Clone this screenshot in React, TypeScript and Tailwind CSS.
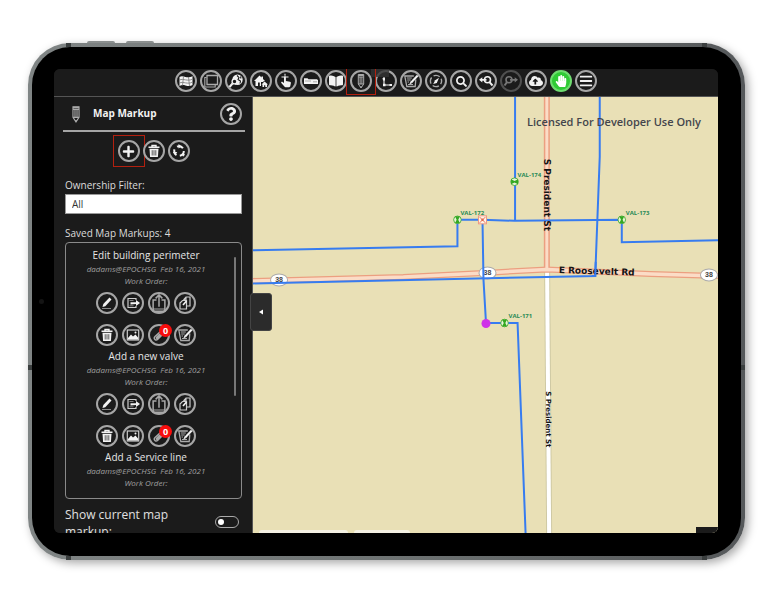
import { useState, type ReactNode } from 'react';
import { FaBars, FaBookOpen, FaCloudUploadAlt, FaHandPaper, FaPlus, FaQuestion, FaSearch } from 'react-icons/fa';

interface IconButtonProps {
  label: string;
  children: ReactNode;
  className?: string;
}

function IconButton({ label, children, className = 'border-[#a6a6a6] text-[#f2f2f2]' }: IconButtonProps) {
  return (
    <button
      type="button"
      aria-label={label}
      className={`relative flex h-[22px] w-[22px] shrink-0 cursor-pointer items-center justify-center rounded-full border-2 ${className}`}
    >
      {children}
    </button>
  );
}

function Glyph({ children, className = 'h-4 w-4' }: { children: ReactNode; className?: string }) {
  return (
    <svg viewBox="0 0 16 16" fill="none" stroke="currentColor" className={`shrink-0 ${className}`} aria-hidden="true">
      {children}
    </svg>
  );
}

const MapGlyph = () => (
  <Glyph>
    <path d="M1.500 4c2-1.500 4-.6 6 0s4.500 .6 7-1v9c-2 1.500-4.500 1-7 .4s-4-.6-6 .6z" fill="currentColor" stroke="none" />
    <path d="M1.500 7c4-2 8 2 13-1M1.500 10c4-2 8 2 13-1M5.500 3.500l-1 9M10.500 4l1 9" stroke="#777" strokeWidth=".8" />
  </Glyph>
);

const LayersGlyph = () => (
  <Glyph>
    <path d="M4 2.500h10.500v9H4z" stroke="#aaa" strokeWidth="1.300" />
    <path d="M3.500 4.500H1.800v9.500h10.400V12" stroke="#aaa" strokeWidth="1.100" />
  </Glyph>
);

const GlobeSearchGlyph = () => (
  <Glyph>
    <circle cx="9.500" cy="6.800" r="5.200" fill="currentColor" stroke="none" />
    <path d="M9 2.500l2 2-1 2 2.500 1.500-.5 2.500M12.500 3.500l.5 2" stroke="#1b1b1b" strokeWidth="1.100" />
    <circle cx="6.500" cy="8.500" r="2.400" fill="#1b1b1b" strokeWidth="1.400" />
    <path d="M4.500 10.500L1.500 14" strokeWidth="2" />
  </Glyph>
);

const HomeGlyph = () => (
  <Glyph>
    <path d="M1 8l5.500-5.500 2 2V3.500h1.500V6l2 2h-1.500v1H8v4H6.800V9.500H5V13H2.500V8z" fill="currentColor" stroke="none" />
    <path d="M8.500 11.500l3-3 3.500 3h-1V14h-1.700v-1.800h-1.200V14H9.500v-2.500z" fill="currentColor" stroke="none" />
  </Glyph>
);

const TouchGlyph = () => (
  <Glyph>
    <path d="M6 4.200c0-1.200 1.900-1.200 1.900 0V8l4 .7c.8.2 1.100.7 1 1.400l-.6 3c-.1.700-.6 1.100-1.200 1.100H7.500c-.5 0-.8-.2-1.100-.6L3.300 10c-.6-.9.5-1.700 1.300-1.100L6 10z" fill="currentColor" stroke="none" />
    <path d="M3.500 4h7M7 .8v2" strokeWidth="1.100" />
  </Glyph>
);

const ValveGlyph = () => (
  <Glyph>
    <path d="M1 5.300h3.500l1 1H14l1 1V11H1z" fill="currentColor" stroke="none" />
    <path d="M2 8h6M10 8.800h4" stroke="#888" strokeWidth=".7" />
  </Glyph>
);

const PencilGlyph = ({ className }: { className?: string }) => (
  <Glyph className={className}>
    <path d="M5.300 1.500h5.400v9.500L8 15l-2.700-4zM5.300 4h5.400M5.300 11h5.400M7.100 4v7M8.900 4v7" stroke="#aaa" strokeWidth="1" />
    <path d="M5.300 1.500h5.400V3H5.300zM7 13.300h2L8 15z" fill="#aaa" stroke="none" />
  </Glyph>
);

const MeasureGlyph = () => (
  <Glyph>
    <path d="M6 4v8h7" strokeWidth="1.100" />
    <path d="M4.500 5H7v2.500H5zM5 10.800h2.500v2.400H5zM11.500 11H14v2h-2.500z" fill="currentColor" stroke="none" />
  </Glyph>
);

const NoteGlyph = () => (
  <Glyph>
    <path d="M12.800 6.500l-.6 7H3.800L1.800 3h9" stroke="#aaa" strokeWidth="1.300" />
    <path d="M3.800 5h5M4.200 7h3.500M4.600 9H6M5 11.500h5" stroke="#aaa" strokeWidth="1" />
    <path d="M14.700 2.500l-6.500 7" strokeWidth="2" />
    <path d="M7.500 8.600l1.700 1.500-2.900 1.500z" fill="currentColor" stroke="none" />
  </Glyph>
);

const CompassGlyph = () => (
  <Glyph>
    <circle cx="8" cy="8" r="5.600" stroke="#aaa" strokeWidth="1.400" strokeDasharray="6.500 2.300" strokeDashoffset="3.200" />
    <path d="M11 4.800L8.800 10 5.200 11l2-3.800z" fill="currentColor" stroke="none" />
  </Glyph>
);

const SearchBackGlyph = ({ flip = false }: { flip?: boolean }) => (
  <Glyph>
    <circle cx={flip ? 6 : 9.500} cy="6.800" r="3" strokeWidth="1.600" />
    <path d={flip ? 'M4 9.200L1.500 12.500' : 'M11.500 9.200l3 3.300'} strokeWidth="2" />
    <path
      d={flip ? 'M15 6.800l-3.300-2.600v1.700H7v1.800h4.700v1.700z' : 'M1 6.800l3.300-2.600v1.700h4.200v1.800H4.300v1.700z'}
      fill="currentColor"
      stroke="none"
    />
  </Glyph>
);

const TrashGlyph = () => (
  <Glyph>
    <path d="M2.500 4.300h11M6 4V2.500h4V4" strokeWidth="1.400" />
    <path d="M3.500 5.800h9l-.6 8.200H4.100z" fill="currentColor" stroke="none" />
    <path d="M6.200 7.200v5.300M8 7.200v5.300M9.800 7.200v5.300" stroke="#1b1b1b" strokeWidth=".7" />
  </Glyph>
);

const RefreshGlyph = () => (
  <Glyph>
    <circle cx="8" cy="8" r="4.800" strokeWidth="2" strokeDasharray="6.500 3.500" />
    <path d="M7.500 1l3 2.200-3 2.200zM1.800 9h4.500l-2.200 3zM11 10.500l3.200 1-2.200 2.200z" fill="currentColor" stroke="none" />
  </Glyph>
);

const EditGlyph = () => (
  <Glyph>
    <path d="M3.500 12l.8-3L10.500 2.500l2 2L6.300 11.200z" fill="currentColor" stroke="none" />
    <path d="M3 13.500h9" stroke="#888" strokeWidth="1" />
  </Glyph>
);

const ExportGlyph = () => (
  <Glyph>
    <path d="M11 5V3.500H3v9h8V11" stroke="#ccc" strokeWidth="1.200" />
    <path d="M5.500 9.500V7.200H11V5l4 3-4 3V9z" fill="currentColor" stroke="none" />
    <path d="M4.500 5.500h4M4.500 10.800h4" stroke="#999" strokeWidth=".8" />
  </Glyph>
);

const ShareGlyph = () => (
  <Glyph className="h-[20px] w-[20px]">
    <path d="M6 5.500H3.300V14.500h9.400V5.500H10M8 11V2M5.300 4.300L8 1.500l2.700 2.800" stroke="#a9a9a9" strokeWidth="1.200" />
    <path d="M3 12.800h10" stroke="#a9a9a9" strokeWidth=".8" />
  </Glyph>
);

const CopyGlyph = () => (
  <Glyph>
    <path d="M6.500 5L9 2h4v9h-3M6.500 5H9V2" stroke="#ccc" strokeWidth="1.200" />
    <path d="M3 8l2.500-2.500H9.500V14H3z" stroke="#ccc" strokeWidth="1.200" />
    <path d="M6 10l3.500-4" strokeWidth="1.600" />
  </Glyph>
);

const ImageGlyph = () => (
  <Glyph>
    <rect x="2.300" y="3" width="11.400" height="10" stroke="#ccc" strokeWidth="1.200" />
    <path d="M3 12.500V11l3-3.500 2 2 2.500-2 2.500 3v2z" fill="currentColor" stroke="none" />
    <circle cx="10.500" cy="5.500" r="1" fill="currentColor" stroke="none" />
  </Glyph>
);

const ClipGlyph = () => (
  <Glyph>
    <path d="M10 4L4 9.500c-2 2 .8 4.800 2.800 2.800l5.500-5.600M9 7l-3.500 3.500c-.5.600.3 1.300.8.8L12 6" stroke="#a9a9a9" strokeWidth="1.400" />
  </Glyph>
);

const tools = [
  { label: 'Basemaps', icon: <MapGlyph /> },
  { label: 'Layers', icon: <LayersGlyph /> },
  { label: 'Find location', icon: <GlobeSearchGlyph /> },
  { label: 'Home', icon: <HomeGlyph /> },
  { label: 'Identify', icon: <TouchGlyph /> },
  { label: 'Valve isolation', icon: <ValveGlyph /> },
  { label: 'Bookmarks', icon: <FaBookOpen className="h-[14px] w-[14px]" /> },
  { label: 'Map markup', icon: <PencilGlyph />, active: true },
  { label: 'Measure', icon: <MeasureGlyph />, hint: true },
  { label: 'Notes', icon: <NoteGlyph /> },
  { label: 'Locate me', icon: <CompassGlyph /> },
  { label: 'Search', icon: <FaSearch className="h-[11px] w-[11px]" /> },
  { label: 'Previous extent', icon: <SearchBackGlyph /> },
  { label: 'Next extent', icon: <SearchBackGlyph flip />, tone: 'border-[#505050] text-[#777]' },
  { label: 'Sync', icon: <FaCloudUploadAlt className="h-[14px] w-[14px]" /> },
  { label: 'Pan', icon: <FaHandPaper className="h-3 w-3" />, tone: 'border-[#6fdc70] bg-[#2fcb35] text-white' },
  { label: 'Menu', icon: <FaBars className="h-[14px] w-[14px]" /> },
];

const markups = [
  { title: 'Edit building perimeter', author: 'dadams@EPOCHSG', date: 'Feb 16, 2021', attachments: 0 },
  { title: 'Add a new valve', author: 'dadams@EPOCHSG', date: 'Feb 16, 2021', attachments: 0 },
  { title: 'Add a Service line', author: 'dadams@EPOCHSG', date: 'Feb 16, 2021', attachments: 0 },
];

function Toolbar() {
  return (
    <header className="flex h-7 shrink-0 items-start justify-center gap-[3px] border-b border-[#555] bg-[#1b1b1b] pt-px">
      {tools.map((tool) => (
        <div key={tool.label} className="relative">
          <IconButton label={tool.label} className={tool.tone}>
            {tool.icon}
          </IconButton>
          {tool.active && <span className="pointer-events-none absolute -inset-x-1 -top-1 -bottom-[3px] z-10 border border-[#b3200f]" />}
          {tool.hint && <span className="pointer-events-none absolute -top-px -left-1 h-2 w-[18px] bg-[#333]/80" />}
        </div>
      ))}
    </header>
  );
}

function MarkupItem({ markup }: { markup: typeof markups[number] }) {
  return (
    <li className="flex flex-col items-center pb-[3px]">
      <h3 className="text-[10px] leading-[15px] whitespace-nowrap text-[#e6e6e6]">{markup.title}</h3>
      <p className="text-[8px] leading-3 whitespace-nowrap text-[#a0a0a0] italic">
        {markup.author}&nbsp; {markup.date}
      </p>
      <p className="text-[8px] leading-3 text-[#a0a0a0] italic">Work Order:</p>
      <div className="mt-[5px] grid grid-cols-4 gap-x-1 gap-y-[10px]">
        <IconButton label="Edit"><EditGlyph /></IconButton>
        <IconButton label="Export"><ExportGlyph /></IconButton>
        <IconButton label="Share"><ShareGlyph /></IconButton>
        <IconButton label="Copy"><CopyGlyph /></IconButton>
        <IconButton label="Delete"><TrashGlyph /></IconButton>
        <IconButton label="Image"><ImageGlyph /></IconButton>
        <IconButton label="Attachments">
          <ClipGlyph />
          <span className="absolute -top-[2px] -right-[4px] flex h-[13px] w-[13px] items-center justify-center rounded-full bg-[#f80d0d] text-[9px] leading-none font-bold text-white">
            {markup.attachments}
          </span>
        </IconButton>
        <IconButton label="Notes"><NoteGlyph /></IconButton>
      </div>
    </li>
  );
}

function Sidebar() {
  const [showCurrent, setShowCurrent] = useState(false);

  return (
    <aside className="relative flex w-[199px] shrink-0 flex-col border-r border-[#555] bg-[#1b1b1b] pr-[10px] pl-[11px]">
      <div className="-mr-[3px] -ml-[2px] flex h-[35px] shrink-0 items-center border-b-2 border-[#a5a5a5] pr-[3px] pl-1">
        <PencilGlyph className="h-[18px] w-[18px]" />
        <h2 className="ml-2 flex-1 text-[10px] font-bold text-[#f2f2f2]">Map Markup</h2>
        <IconButton label="Help">
          <FaQuestion className="h-[14px] w-[14px]" />
        </IconButton>
      </div>

      <div className="mt-2 flex shrink-0 justify-center gap-[3px]">
        <div className="relative">
          <IconButton label="Add markup"><FaPlus className="h-[13px] w-[13px]" /></IconButton>
          <span className="pointer-events-none absolute -inset-[5px] border border-[#b3200f]" />
        </div>
        <IconButton label="Delete markups"><TrashGlyph /></IconButton>
        <IconButton label="Refresh"><RefreshGlyph /></IconButton>
      </div>

      <label htmlFor="owner" className="mt-[15px] text-[10px] leading-4 text-[#dcdcdc]">Ownership Filter:</label>
      <select id="owner" className="mt-px h-5 w-full shrink-0 appearance-none border border-[#999] bg-white px-[6px] text-[10px] text-[#333]">
        <option>All</option>
      </select>

      <p className="mt-[11px] text-[10px] leading-4 text-[#dcdcdc]">Saved Map Markups: 4</p>
      <div className="relative mt-px h-[257px] shrink-0 rounded-[4px] border border-[#8a8a8a] pt-[5px] pr-[15px] pb-2">
        <ul className="h-full overflow-hidden">
          {markups.map((markup) => (
            <MarkupItem key={markup.title} markup={markup} />
          ))}
        </ul>
        <span className="absolute top-[14px] right-[5px] h-[139px] w-[2px] rounded-full bg-[#777]" />
      </div>

      <div className="mt-[7px] flex items-start justify-between gap-4 pr-[3px]">
        <label htmlFor="current" className="text-[12px] leading-[17px] text-[#e0e0e0]">Show current map markup:</label>
        <input
          id="current"
          type="checkbox"
          role="switch"
          checked={showCurrent}
          onChange={(e) => setShowCurrent(e.target.checked)}
          className="mt-[10px] flex h-3 w-6 shrink-0 appearance-none items-center rounded-full border border-[#aaa] px-[2px] before:h-[6px] before:w-[6px] before:rounded-full before:bg-white checked:justify-end"
        />
      </div>

      <button
        type="button"
        aria-label="Collapse panel"
        className="absolute top-[196px] -right-5 z-10 flex h-[38px] w-[22px] items-center justify-center rounded-[3px] border border-[#444] bg-[#2b2b2b] text-white"
      >
        <svg viewBox="0 0 6 6" className="h-[6px] w-[6px]" fill="currentColor"><path d="M5 .5v5L1 3z" /></svg>
      </button>
    </aside>
  );
}

const valves = [
  { id: 'VAL-172', x: 204, y: 123, lx: 207, ly: 118, turn: 90 },
  { id: 'VAL-173', x: 368, y: 123, lx: 372, ly: 118, turn: 90 },
  { id: 'VAL-174', x: 261, y: 85, lx: 264, ly: 80, turn: 0 },
  { id: 'VAL-171', x: 251, y: 226, lx: 255, ly: 221, turn: 90 },
];

const shields = [
  { x: 26, y: 183 },
  { x: 234, y: 176 },
  { x: 455, y: 178 },
];

function MapView() {
  const highway = 'M0 184L150 180L240 175.500L293 172.500L397 177L464 179';

  return (
    <main className="relative min-w-0 flex-1 overflow-hidden bg-[#e9e0b6]">
      <svg viewBox="0 0 464 436" preserveAspectRatio="xMidYMid slice" className="block h-full w-full">
        <g fill="none">
          <path d="M293.500 175L295.500 436" stroke="#cfc9a4" strokeWidth="6" />
          <path d="M293.500 175L295.500 436" stroke="#fff" strokeWidth="4" />
          <path d={highway} stroke="#ec9f80" strokeWidth="6" />
          <path d="M293.200 0V173" stroke="#ec9f80" strokeWidth="6" />
          <path d={highway} stroke="#fbdcc6" strokeWidth="3.500" />
          <path d="M293.200 0V173" stroke="#fbdcc6" strokeWidth="3" />
        </g>
        {shields.map((s) => (
          <g key={s.x}>
            <ellipse cx={s.x} cy={s.y} rx="8.500" ry="6" fill="#fff" stroke="#aaa" />
            <text x={s.x} y={s.y + 2} textAnchor="middle" className="fill-[#444] font-[family-name:'Liberation_Sans',sans-serif] text-[7px] font-bold">38</text>
          </g>
        ))}
        <g fill="none" stroke="#377cf0" strokeWidth="2">
          <path d="M0 153.500L204 149.500V123H229L261 124L368 123V145.500L464 143.500" />
          <path d="M261.500 0V124" />
          <path d="M346 0V60L341.500 179L0 186.500" />
          <path d="M229 123L230 183L232.500 226H264L272 436" />
        </g>
        <g className="fill-[#141414] font-[family-name:'DejaVu_Sans',sans-serif] font-bold">
          <text transform="translate(290 62) rotate(90)" className="text-[9px]">S President St</text>
          <text transform="translate(292 294) rotate(90)" className="text-[7px]">S President St</text>
          <text transform="translate(305 176) rotate(2)" className="text-[9px]">E Roosevelt Rd</text>
        </g>
        <path d="M342 165L341.500 179H338" fill="none" stroke="#377cf0" strokeWidth="2" />
        {valves.map((v) => (
          <g key={v.id}>
            <g transform={`translate(${v.x} ${v.y}) rotate(${v.turn})`}>
              <circle r="3.800" fill="#e9f3d8" stroke="#35a822" strokeWidth=".8" />
              <path d="M-3.500-2.500L0-.8 3.500-2.500V2.500L0 .8-3.500 2.500z" fill="#35a822" />
            </g>
            <text x={v.lx} y={v.ly} className="fill-[#278a55] font-[family-name:'Open_Sans',sans-serif] text-[6px] font-bold">{v.id}</text>
          </g>
        ))}
        <rect x="225" y="119" width="8" height="8" fill="#fff3ea" stroke="#ef9a83" />
        <path d="M226 120l6 6M232 120l-6 6" stroke="#ef9a83" />
        <circle cx="229" cy="123" r="1.200" fill="#d9694f" />
        <circle cx="232.500" cy="226.500" r="4.500" fill="#cf32e8" />
      </svg>
      <p className="absolute top-[17px] right-[17px] text-[11px] leading-4 font-semibold whitespace-nowrap text-[#43454c]">
        Licensed For Developer Use Only
      </p>
      <div className="absolute bottom-0 left-[6px] flex gap-[6px]">
        <span className="h-[3px] w-[89px] rounded-t-sm bg-[#f4f1e4]" />
        <span className="h-[3px] w-14 rounded-t-sm bg-[#f4f1e4]" />
      </div>
      <span className="absolute right-0 bottom-0 h-[6px] w-[22px] bg-[#1b1b1b]" />
    </main>
  );
}

export default function App() {
  return (
    <div className="flex h-screen bg-white pt-[43px] pr-[23px] pb-[47px] pl-7 font-[family-name:'Open_Sans','Noto_Sans',sans-serif]">
      <div className="relative flex min-w-0 flex-1 rounded-[42px] bg-linear-to-r from-[#808585] via-[#6e7373] to-[#55585a] p-1 shadow-[3px_3px_10px_rgba(0,0,0,0.35)]">
        <span className="absolute -top-[2px] left-[59px] h-[2px] w-7 rounded-t-sm bg-[#8b8f8f]" />
        <span className="absolute -top-[2px] left-[98px] h-[2px] w-7 rounded-t-sm bg-[#8b8f8f]" />
        <span className="absolute top-0 left-[38px] h-1 w-[5px] bg-[#3b3f3f]" />
        <span className="absolute top-0 right-[38px] h-1 w-[5px] bg-[#3b3f3f]" />
        <span className="absolute bottom-0 left-[38px] h-1 w-[5px] bg-[#3b3f3f]" />
        <span className="absolute right-[38px] bottom-0 h-1 w-[5px] bg-[#3b3f3f]" />
        <span className="absolute top-[322px] left-0 h-[5px] w-1 bg-[#3b3f3f]" />
        <span className="absolute top-[322px] right-0 h-[5px] w-1 bg-[#3b3f3f]" />
        <div className="relative flex min-w-0 flex-1 rounded-[38px] bg-black pt-[22px] pr-[23px] pb-[23px] pl-[22px]">
          <span className="absolute top-[252px] left-[7px] h-[5px] w-[5px] rounded-full bg-[#141414]" />
          <div className="flex min-h-0 min-w-0 flex-1 flex-col overflow-hidden rounded-[6px] bg-[#1b1b1b]">
            <Toolbar />
            <div className="flex min-h-0 flex-1">
              <Sidebar />
              <MapView />
            </div>
          </div>
        </div>
      </div>
    </div>
  );
}
